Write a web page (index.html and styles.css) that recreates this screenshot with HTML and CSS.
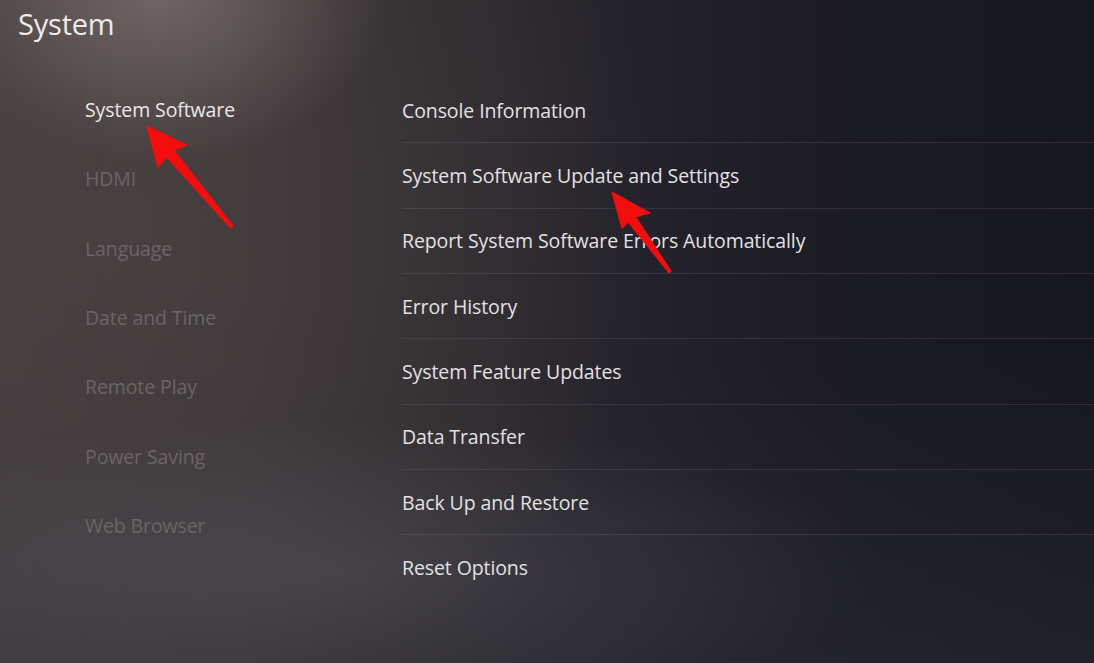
FILE: index.html
```html
<!DOCTYPE html>
<html lang="en">
<head>
<meta charset="utf-8">
<title>System</title>
<link rel="stylesheet" href="styles.css">
</head>
<body>
<div class="screen">
  <header class="header">
    <h1 class="title">System</h1>
  </header>
  <div class="content">
    <nav class="side">
      <div class="side-item active">System Software</div>
      <div class="side-item">HDMI</div>
      <div class="side-item">Language</div>
      <div class="side-item">Date and Time</div>
      <div class="side-item">Remote Play</div>
      <div class="side-item">Power Saving</div>
      <div class="side-item">Web Browser</div>
    </nav>
    <ul class="list">
      <li class="row">Console Information</li>
      <li class="row">System Software Update and Settings</li>
      <li class="row">Report System Software Errors Automatically</li>
      <li class="row">Error History</li>
      <li class="row">System Feature Updates</li>
      <li class="row">Data Transfer</li>
      <li class="row">Back Up and Restore</li>
      <li class="row last">Reset Options</li>
    </ul>
  </div>
  <svg class="arrows" width="1094" height="663" viewBox="0 0 1094 663">
    <polygon points="147,126 187,145 174,150.3 233.1,226 230.8,228 166.4,156.7 158,167" />
    <polygon points="612,192 650,213 635.6,216.9 671,271.2 669,272.8 628.3,222.1 622,228" />
  </svg>
</div>
</body>
</html>
```

FILE: styles.css
```css
html, body {
  margin: 0;
  padding: 0;
  background: #15161f;
}

.screen {
  position: relative;
  width: 1094px;
  height: 663px;
  overflow: hidden;
  font-family: "Open Sans", "Noto Sans", sans-serif;
  background:
    radial-gradient(ellipse 230px 170px at 160px -10px, rgba(150, 136, 132, 0.55), rgba(150, 136, 132, 0) 100%),
    radial-gradient(ellipse 560px 150px at 320px 570px, rgba(95, 95, 105, 0.35), rgba(95, 95, 105, 0) 100%),
    radial-gradient(ellipse 520px 520px at 140px 220px, rgba(78, 70, 70, 0.55), rgba(78, 70, 70, 0) 100%),
    linear-gradient(to bottom, rgba(40, 40, 48, 0) 55%, rgba(50, 50, 58, 0.35) 100%),
    linear-gradient(to right, #443d3e 0%, #3c3638 22%, #302c2f 40%, #24222a 58%, #1b1b23 78%, #17171f 100%);
  display: flex;
  flex-direction: column;
}

.header {
  height: 74px;
  padding-left: 18px;
  box-sizing: border-box;
}

.title {
  margin: 0;
  padding-top: 4px;
  font-size: 29px;
  font-weight: 400;
  color: #eceaea;
  letter-spacing: -0.2px;
  line-height: 40px;
}

.content {
  display: flex;
}

.side {
  width: 317px;
  padding-left: 85px;
  padding-top: 1px;
  display: flex;
  flex-direction: column;
}

.side-item {
  height: 69.3px;
  display: flex;
  align-items: center;
  font-size: 19.5px;
  color: #6a6466;
  letter-spacing: -0.1px;
}

.side-item.active {
  color: #ebe8e8;
}

.list {
  flex: 1;
  list-style: none;
  margin: 0;
  padding: 4px 0 0 0;
  display: flex;
  flex-direction: column;
}

.row {
  height: 65.33px;
  box-sizing: border-box;
  border-bottom: 1px solid rgba(120, 118, 132, 0.24);
  display: flex;
  align-items: center;
  font-size: 19.5px;
  color: #e2e1e4;
  letter-spacing: -0.1px;
}

.row.last {
  border-bottom: none;
}

.arrows {
  position: absolute;
  left: 0;
  top: 0;
  pointer-events: none;
}

.arrows polygon {
  fill: #f40d0d;
  stroke: #f40d0d;
  stroke-width: 1.2;
  stroke-linejoin: round;
}
```
